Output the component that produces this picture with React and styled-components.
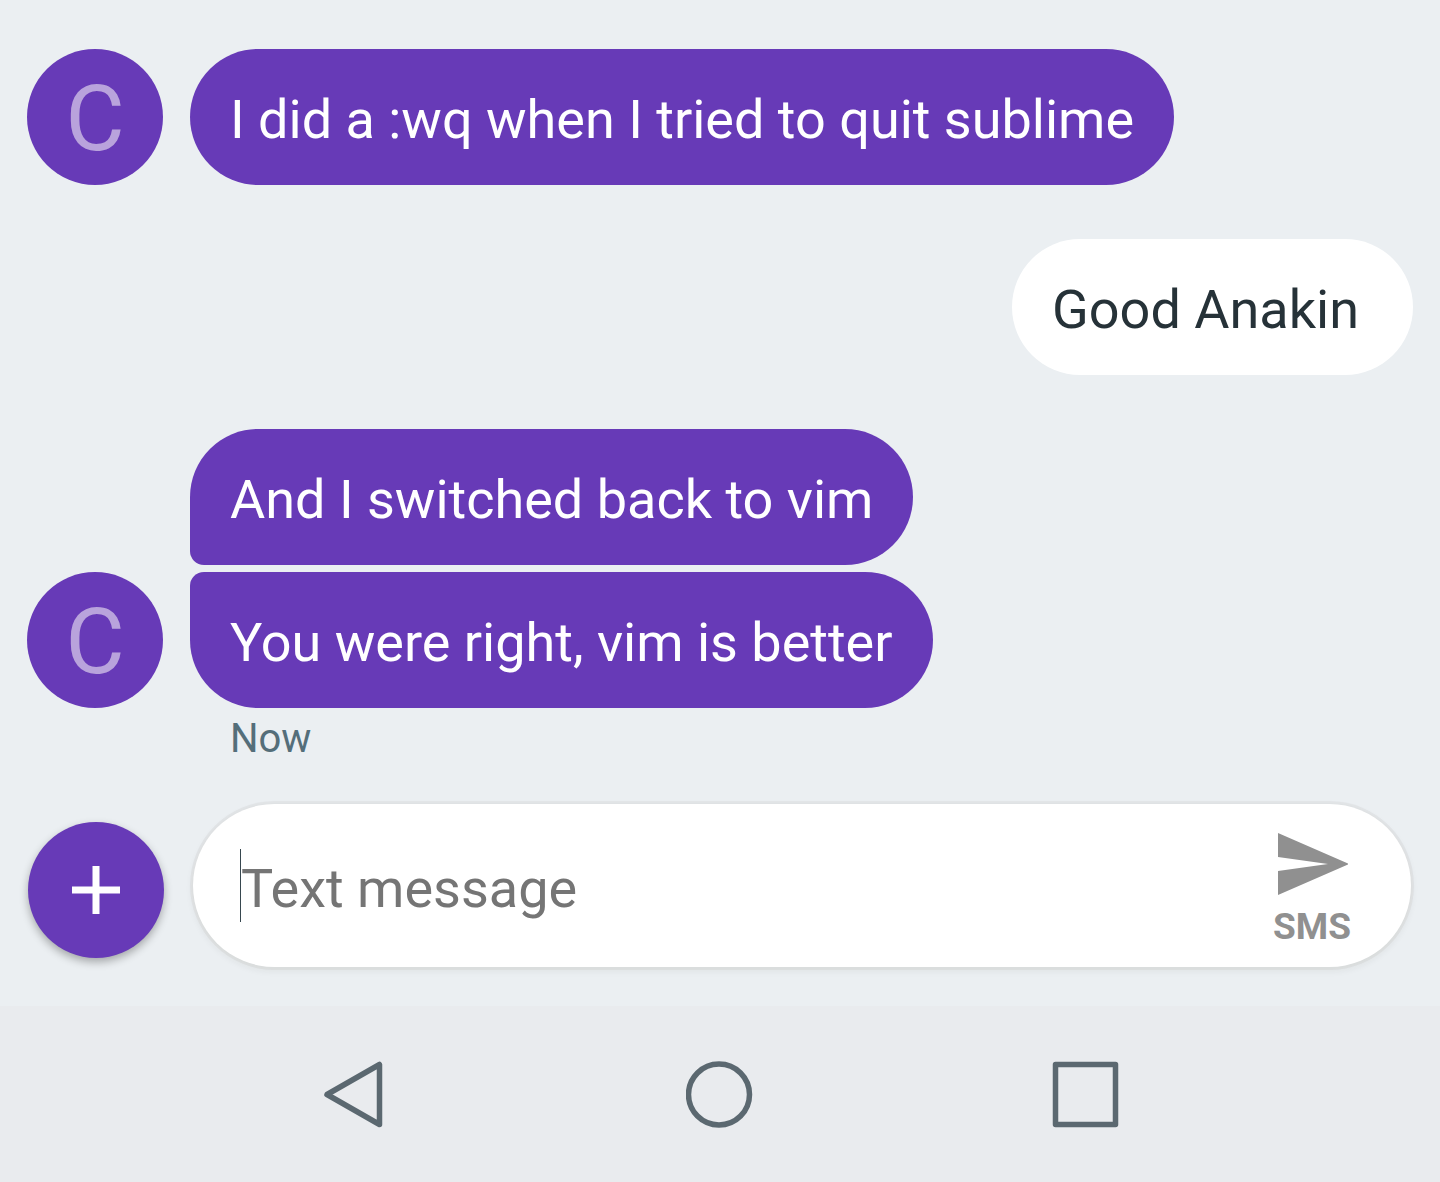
import React from "react";
import styled, { createGlobalStyle, css } from "styled-components";

const GlobalStyle = createGlobalStyle`
  * {
    box-sizing: border-box;
  }
  body {
    margin: 0;
    background: #ebeff2;
    font-family: Roboto, "Noto Sans", sans-serif;
  }
  button {
    border: 0;
    padding: 0;
    font-family: inherit;
    cursor: pointer;
  }
`;

const Screen = styled.div`
  min-height: 100vh;
  display: flex;
  flex-direction: column;
`;

const Conversation = styled.main`
  flex: 1;
  display: flex;
  flex-direction: column;
  gap: 54px;
  padding: 49px 27px 0;
`;

const Group = styled.section`
  display: flex;
  flex-direction: column;
  gap: 7px;
`;

const Row = styled.div`
  display: flex;
  justify-content: ${({ $sent }) => ($sent ? "flex-end" : "flex-start")};
  gap: 27px;
`;

const AvatarSlot = styled.div`
  flex: none;
  width: 136px;
`;

const Avatar = styled.div`
  height: 136px;
  border-radius: 50%;
  background: #673ab7;
  color: #b9a3dc;
  font-size: 91px;
  line-height: 140px;
  text-align: center;
`;

const received = css`
  padding: 39px 40px 33px;
  background: #673ab7;
  color: #fff;
`;

const sent = css`
  padding: 39px 54px 33px 40px;
  background: #fff;
  color: #263238;
`;

const Bubble = styled.p`
  margin: 0;
  font-size: 54px;
  line-height: 64px;
  border-radius: 68px;
  ${({ $sent }) => ($sent ? sent : received)}
  ${({ $joined }) => $joined === "below" && "border-bottom-left-radius: 14px;"}
  ${({ $joined }) => $joined === "above" && "border-top-left-radius: 14px;"}
`;

const Time = styled.time`
  padding-left: 203px;
  color: #546e7a;
  font-size: 40px;
  line-height: 48px;
`;

const Composer = styled.form`
  display: flex;
  align-items: center;
  gap: 29px;
  padding: 40px 29px 39px 28px;
`;

const AddButton = styled.button`
  flex: none;
  display: flex;
  align-items: center;
  justify-content: center;
  width: 136px;
  height: 136px;
  margin-top: 8px;
  border-radius: 50%;
  background: #673ab7;
  box-shadow: 0 4px 8px rgba(0, 0, 0, 0.3);
`;

const Field = styled.div`
  flex: 1;
  min-width: 0;
  display: flex;
  align-items: center;
  height: 163px;
  padding: 0 60px 0 47px;
  border-radius: 82px;
  background: #fff;
  box-shadow: 0 0 0 3px rgba(40, 30, 0, 0.04), 0 3px 6px 2px rgba(40, 30, 0, 0.05);
`;

const Caret = styled.span`
  flex: none;
  width: 1px;
  height: 73px;
  background: #37474f;
`;

const TextInput = styled.input`
  flex: 1;
  min-width: 0;
  height: 73px;
  margin-top: 6px;
  padding: 0;
  border: 0;
  outline: 0;
  background: none;
  color: #263238;
  font-family: inherit;
  font-size: 54px;
  &::placeholder {
    color: #757575;
    opacity: 1;
  }
`;

const SendButton = styled.button`
  display: flex;
  flex-direction: column;
  align-items: center;
  gap: 10px;
  padding-top: 10px;
  background: none;
  color: #909090;
  font-size: 37px;
  font-weight: 700;
  line-height: 44px;
`;

const NavBar = styled.nav`
  display: flex;
  align-items: center;
  justify-content: center;
  gap: 298px;
  height: 176px;
  background: #e9ebee;
`;

const NavButton = styled.button`
  display: flex;
  background: none;
  color: #5b6870;
`;

const NavIcon = ({ children }) => (
  <svg
    width="68"
    height="68"
    viewBox="0 0 68 68"
    fill="none"
    stroke="currentColor"
    strokeWidth="5.5"
    strokeLinejoin="round"
  >
    {children}
  </svg>
);

const App = () => {
  return (
    <>
      <GlobalStyle />
      <Screen>
        <Conversation>
          <Row>
            <AvatarSlot>
              <Avatar>C</Avatar>
            </AvatarSlot>
            <Bubble>I did a :wq when I tried to quit sublime</Bubble>
          </Row>
          <Row $sent>
            <Bubble $sent>Good Anakin</Bubble>
          </Row>
          <Group>
            <Row>
              <AvatarSlot />
              <Bubble $joined="below">And I switched back to vim</Bubble>
            </Row>
            <Row>
              <AvatarSlot>
                <Avatar>C</Avatar>
              </AvatarSlot>
              <Bubble $joined="above">You were right, vim is better</Bubble>
            </Row>
            <Time>Now</Time>
          </Group>
        </Conversation>
        <Composer onSubmit={(e) => e.preventDefault()}>
          <AddButton type="button" aria-label="Add attachment">
            <svg width="48" height="48" viewBox="0 0 48 48" fill="#fff">
              <path d="M20.5 0h7v20.5H48v7H27.5V48h-7V27.5H0v-7h20.5z" />
            </svg>
          </AddButton>
          <Field>
            <Caret />
            <TextInput
              type="text"
              placeholder="Text message"
              aria-label="Text message"
            />
            <SendButton type="submit">
              <svg width="72" height="62" viewBox="0 0 72 62" fill="currentColor">
                <path d="M2 0L73 31L2 62V38L52 31L2 24z" />
              </svg>
              SMS
            </SendButton>
          </Field>
        </Composer>
        <NavBar>
          <NavButton type="button" aria-label="Back">
            <NavIcon>
              <path d="M59.5 4.5V64.5L7 34.5z" />
            </NavIcon>
          </NavButton>
          <NavButton type="button" aria-label="Home">
            <NavIcon>
              <circle cx="33" cy="34.5" r="30.5" />
            </NavIcon>
          </NavButton>
          <NavButton type="button" aria-label="Recent apps">
            <NavIcon>
              <path d="M3.5 4.5H63.5V64.5H3.5z" />
            </NavIcon>
          </NavButton>
        </NavBar>
      </Screen>
    </>
  );
};

export default App;
